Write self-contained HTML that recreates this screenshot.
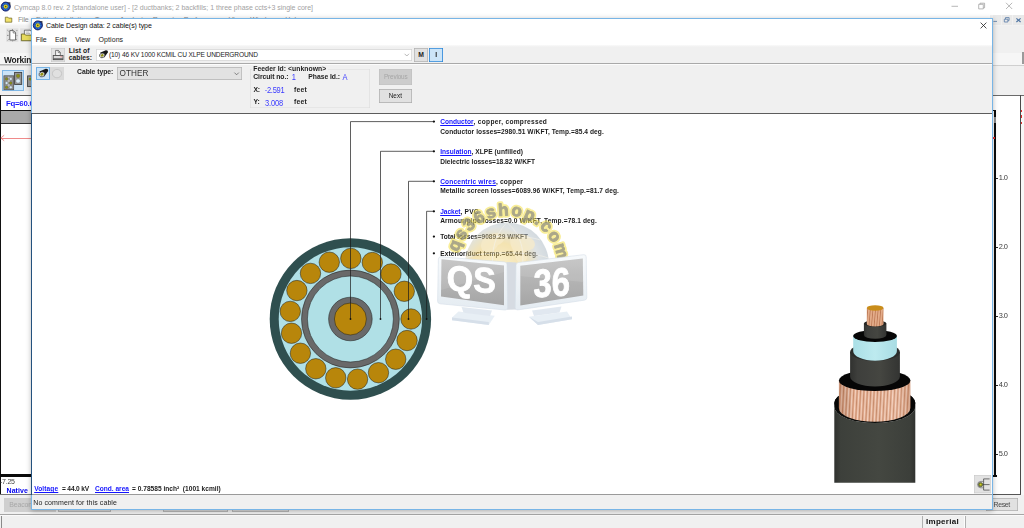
<!DOCTYPE html>
<html>
<head>
<meta charset="utf-8">
<title>Cymcap - Cable Design data</title>
<style>
html,body{margin:0;padding:0;}
body{width:1024px;height:528px;overflow:hidden;position:relative;background:#f0f0f0;font-family:"Liberation Sans",sans-serif;}
.a{position:absolute;}
.t{position:absolute;white-space:pre;font-family:"Liberation Sans",sans-serif;}
#main{filter:blur(0.35px);position:absolute;left:0;top:0;width:1024px;height:528px;overflow:hidden;}
#dlg{position:absolute;left:31px;top:18px;width:962px;height:492px;background:#f0f0f0;box-sizing:border-box;box-shadow:0 1px 5px rgba(0,0,0,0.28);}
#dlgin{filter:blur(0.35px);position:absolute;left:-31px;top:-18px;width:1024px;height:528px;}
</style>
</head>
<body>
<!-- ================= MAIN WINDOW (behind) ================= -->
<div id="main">
<!-- title bar + menu bar -->
<div class="a" style="left:0;top:0;width:1024px;height:25px;background:#fff"></div>
<!-- toolbar area -->
<div class="a" style="left:0;top:23px;width:1024px;height:29px;background:linear-gradient(#fff,#f0f0f0 3px,#f0f0f0)"></div>
<!-- tab strip -->
<div class="a" style="left:0;top:53px;width:1024px;height:11.5px;background:#f6f6f6"></div>
<div class="a" style="left:0;top:64.4px;width:1024px;height:2px;background:linear-gradient(#a4a4a4,#dedede)"></div>
<!-- selected tool icon (left) -->
<div class="a" style="left:2px;top:70px;width:22px;height:21px;background:#cce4f7;box-shadow:inset 0 0 0 1px #7fb7e6"></div>
<!-- left drawing area -->
<div class="a" style="left:0;top:95px;width:40px;height:1px;background:#5a5a5a"></div>
<div class="a" style="left:0;top:96px;width:40px;height:399px;background:#fff"></div>
<div class="a" style="left:0;top:110px;width:40px;height:13px;background:#a9a9a9"></div>
<div class="a" style="left:0;top:110px;width:40px;height:1px;background:#111"></div>
<div class="a" style="left:0;top:123px;width:40px;height:1px;background:#333"></div>
<div class="a" style="left:0;top:95px;width:1px;height:400px;background:#111"></div>
<div class="a" style="left:1px;top:137.5px;width:34px;height:1px;background:#f08a8a"></div>
<div class="a" style="left:0;top:474px;width:40px;height:3px;background:#0a0a0a"></div>
<div class="a" style="left:0;top:494px;width:40px;height:1px;background:#777"></div>
<!-- bottom button row -->
<div class="a" style="left:4px;top:498px;width:52px;height:14px;background:#cfcfcf"></div>
<div class="a" style="left:58px;top:498px;width:53px;height:14px;background:#dcdcdc;box-shadow:inset 0 0 0 1px #b8b8b8"></div>
<div class="a" style="left:163px;top:498px;width:65px;height:14px;background:#dcdcdc;box-shadow:inset 0 0 0 1px #b8b8b8"></div>
<div class="a" style="left:232px;top:498px;width:57px;height:14px;background:#dcdcdc;box-shadow:inset 0 0 0 1px #b8b8b8"></div>
<div class="a" style="left:986px;top:498.3px;width:31.7px;height:13px;background:#e1e1e1;box-shadow:inset 0 0 0 0.7px #b0b0b0"></div>
<div class="a" style="left:0;top:514px;width:1024px;height:1px;background:#a6a6a6"></div>
<div class="a" style="left:0;top:515px;width:1024px;height:1px;background:#fafafa"></div>
<div class="a" style="left:1px;top:516px;width:1px;height:12px;background:#8a8a8a"></div>
<div class="a" style="left:921.5px;top:516px;width:1px;height:12px;background:#b0b0b0"></div><div class="a" style="left:963.5px;top:516px;width:1px;height:12px;background:#fdfdfd"></div>
<div class="a" style="left:965px;top:516px;width:1px;height:12px;background:#b0b0b0"></div>
<!-- right strip: MDI buttons, drawing area, ruler -->
<div class="a" style="left:990px;top:14.5px;width:34px;height:10.2px;background:#f1f1f1"></div><div class="a" style="left:993px;top:15px;width:8px;height:9.6px;background:#e9e9e9"></div><div class="a" style="left:1002.3px;top:15px;width:9.4px;height:9.6px;background:#e9e9e9"></div><div class="a" style="left:1013px;top:15px;width:11px;height:9.6px;background:#e9e9e9"></div>
<div class="a" style="left:993px;top:53px;width:31px;height:11.5px;background:#f6f6f6"></div>
<div class="a" style="left:1022px;top:52px;width:2px;height:12px;background:#9a9a9a"></div>
<div class="a" style="left:993px;top:95px;width:28px;height:400px;background:#fff"></div>
<div class="a" style="left:993px;top:95px;width:31px;height:1px;background:#6a6a6a"></div><div class="a" style="left:1021px;top:96px;width:3px;height:399px;background:#f7f7f7"></div>
<div class="a" style="left:1020px;top:95px;width:1px;height:400px;background:#4a4a4a"></div>
<div class="a" style="left:993px;top:494px;width:28px;height:1px;background:#555"></div>
<div class="a" style="left:994.3px;top:110px;width:2px;height:367px;background:#0a0a0a"></div><div class="a" style="left:993px;top:475px;width:4px;height:2px;background:#0a0a0a"></div><div class="a" style="left:994.3px;top:116.5px;width:2px;height:6.5px;background:#8a8a8a"></div>
<div class="a" style="left:990px;top:110px;width:6px;height:1px;background:#0a0a0a"></div>
<div class="a" style="left:996px;top:178px;width:2px;height:1px;background:#222"></div>
<div class="a" style="left:996px;top:247px;width:2px;height:1px;background:#222"></div>
<div class="a" style="left:996px;top:316px;width:2px;height:1px;background:#222"></div>
<div class="a" style="left:996px;top:385px;width:2px;height:1px;background:#222"></div>
<div class="a" style="left:996px;top:454px;width:2px;height:1px;background:#222"></div>
<div class="a" style="left:1021px;top:110px;width:1px;height:2.4px;background:#e03030"></div>
<div class="a" style="left:1021px;top:114.7px;width:1px;height:3.3px;background:#e03030"></div><div class="a" style="left:1021px;top:121.5px;width:1px;height:2.3px;background:#e03030"></div>
<div class="a" style="left:993px;top:137px;width:2px;height:2px;background:#e03030"></div>
<svg class="a" style="left:0;top:0" width="1024" height="528" viewBox="0 0 1024 528">
  <!-- app icon -->
  <g transform="translate(5.7,6.6)">
  <path d="M0.5 -4.4L4.6 -4.4L4.8 0.6L2 3z" fill="#4a4a4a"/>
  <circle cx="0" cy="0" r="4.5" fill="#1f3fb4"/><circle cx="0" cy="0" r="4.5" fill="none" stroke="#0f1f66" stroke-width="0.9"/>
  <circle cx="0" cy="0" r="3" fill="none" stroke="#35c0d0" stroke-width="0.9" stroke-dasharray="0.9 0.9"/>
  <circle cx="0" cy="0" r="2.1" fill="#d8d020"/><circle cx="0" cy="0" r="0.8" fill="#5a5200"/>
  </g>
  <!-- window controls -->
  <g stroke="#9a9a9a" stroke-width="0.7" fill="none">
    <path d="M951.5 6.3H958"/>
    <path d="M978.7 4.3h4.6v4.6h-4.6z M980 4.3V3.2h4.6v4.6h-1.2"/>
    <path d="M1006 2.8l6.2 6.2M1012.2 2.8l-6.2 6.2"/>
  </g>
  <!-- MDI child controls -->
  <g stroke="#6585ad" stroke-width="0.9" fill="none">
    <path d="M993.4 21.4h3.6"/>
    <path d="M1004.3 19.2h3.6v2.8h-3.6z M1005.5 19.2v-1.6h3.6v2.8h-1.2"/>
    <path d="M1016.4 18.4l4.2 3.6M1020.6 18.4l-4.2 3.6" stroke="#4f75a3" stroke-width="1.2"/>
  </g>
  <!-- folder icon in menu bar -->
  <path d="M5.3 17.2h2.6l.7.9h3.2v4.1H5.3z" fill="#f2e36a" stroke="#6a6224" stroke-width="0.7"/>
  <!-- toolbar: new -->
  <rect x="6.2" y="28.4" width="12.2" height="13.4" fill="#e0e0e0"/>
  <path d="M9.8 30.6h3.6l2.2 2.2v7.2h-5.8z" fill="#fff" stroke="#4a4a4a" stroke-width="0.8"/>
  <path d="M13.2 30.8v2.2h2.2" fill="none" stroke="#4a4a4a" stroke-width="0.6"/>
  <g stroke="#6a6a6a" stroke-width="0.7"><path d="M7.4 30.2l1.2 1.1M17.2 30.2l-1 1M7 35.4h1.6M7.6 40.4l1.1-1M12.4 29v1.2M17.4 35.6h-.8M17 40l-.8-.7M12.6 41.4v-.8"/></g>
  <!-- toolbar: open -->
  <rect x="20.2" y="28.4" width="12.2" height="13.4" fill="#e0e0e0"/>
  <path d="M24.4 30.2h5.6l1.6 1.4v4.6h-7.2z" fill="#fff" stroke="#4a4a4a" stroke-width="0.7"/>
  <path d="M25.6 32h3.2M25.6 33.4h4.4" stroke="#777" stroke-width="0.5"/>
  <path d="M21.4 34h3.2l.9 1.1h6v5.6h-10.1z" fill="#e6da5e" stroke="#5e5a20" stroke-width="0.8"/>
  <!-- left tool icon art -->
  <rect x="3.9" y="75.8" width="9.8" height="13.9" fill="#8e8e8e" stroke="#4e4e4e" stroke-width="0.7"/>
  <g fill="#b9b9b9"><path d="M8.7 79.3l1.5 1.6-1.5 1.6-1.5-1.6zM8.7 83.5l1.5 1.6-1.5 1.6-1.5-1.6zM8.7 76.4l1.2 1.2-1.2 1.2-1.2-1.2z"/></g>
  <g stroke="#5a5a5a" stroke-width="0.3">
    <circle cx="6.6" cy="78.9" r="1.4" fill="#8b8f14"/><circle cx="10.75" cy="78.9" r="1.4" fill="#d5e9f7"/>
    <circle cx="6.6" cy="83.1" r="1.4" fill="#d5e9f7"/><circle cx="10.75" cy="83.1" r="1.4" fill="#8b8f14"/>
    <circle cx="6.6" cy="87.3" r="1.4" fill="#8b8f14"/><circle cx="10.75" cy="87.3" r="1.4" fill="#d5e9f7"/>
  </g>
  <rect x="14.6" y="72.4" width="7.1" height="12" fill="#9a9a9a" stroke="#3e3e3e" stroke-width="0.9"/>
  <circle cx="18.1" cy="75.8" r="1.9" fill="#8b8f14" stroke="#555" stroke-width="0.3"/>
  <ellipse cx="18.1" cy="81" rx="2.3" ry="2.1" fill="#d9ecf9" stroke="#666" stroke-width="0.3"/>
  <rect x="25" y="70" width="7" height="21" fill="#e9e9e9"/>
  <rect x="27.6" y="75.9" width="6" height="10.7" fill="#9a9a9a" stroke="#3e3e3e" stroke-width="0.9"/>
  <circle cx="30.2" cy="79" r="1.5" fill="#8b8f14"/>
  <!-- red arrow head -->
  <path d="M4.2 135.2L0.8 138l3.4 2.8" fill="none" stroke="#ee7a7a" stroke-width="0.8"/>
</svg>

<span class="t" style="left:14.00px;top:3.60px;font-size:7px;line-height:8.40px;font-weight:400;color:#a2a2a2;letter-spacing:-0.003px;">Cymcap 8.0 rev. 2 [standalone user] - [2 ductbanks; 2 backfills; 1 three phase ccts+3 single core]</span>
<span class="t" style="left:18.00px;top:16.00px;font-size:7px;line-height:8.40px;font-weight:400;color:#8a8a8a;letter-spacing:-0.195px;">File</span>
<span class="t" style="left:36.00px;top:16.40px;font-size:7px;line-height:8.40px;font-weight:400;color:#8a8a8a;letter-spacing:0.087px;">Edit   Installation   Types   Analysis   Reports   Preferences   View   Windows   Help</span>
<span class="t" style="left:4.00px;top:54.56px;font-size:8.4px;line-height:10.08px;font-weight:700;color:#222;letter-spacing:-0.194px;">Working</span>
<span class="t" style="left:6.00px;top:99.12px;font-size:7.8px;line-height:9.36px;font-weight:700;color:#1a1aff;letter-spacing:-0.238px;">Fq=60.0</span>
<span class="t" style="left:0.00px;top:478.20px;font-size:7px;line-height:8.40px;font-weight:400;color:#444;letter-spacing:-0.254px;">-7.25</span>
<span class="t" style="left:6.50px;top:486.60px;font-size:7px;line-height:8.40px;font-weight:700;color:#0000ee;letter-spacing:0.081px;">Native</span>
<span class="t" style="left:9.20px;top:500.60px;font-size:7px;line-height:8.40px;font-weight:400;color:#a8a8a8;letter-spacing:-0.158px;">Beacon</span>
<span class="t" style="left:993.60px;top:501.10px;font-size:7px;line-height:8.40px;font-weight:400;color:#4a4a4a;letter-spacing:-0.419px;">Reset</span>
<span class="t" style="left:926.00px;top:517.40px;font-size:8px;line-height:9.60px;font-weight:700;color:#111;letter-spacing:0.289px;">Imperial</span>
<span class="t" style="left:998.70px;top:173.96px;font-size:7.4px;line-height:8.88px;font-weight:400;color:#3a3a3a;letter-spacing:-0.527px;">1.0</span>
<span class="t" style="left:998.70px;top:242.76px;font-size:7.4px;line-height:8.88px;font-weight:400;color:#3a3a3a;letter-spacing:-0.527px;">2.0</span>
<span class="t" style="left:998.70px;top:312.16px;font-size:7.4px;line-height:8.88px;font-weight:400;color:#3a3a3a;letter-spacing:-0.527px;">3.0</span>
<span class="t" style="left:998.70px;top:380.76px;font-size:7.4px;line-height:8.88px;font-weight:400;color:#3a3a3a;letter-spacing:-0.527px;">4.0</span>
<span class="t" style="left:998.70px;top:449.76px;font-size:7.4px;line-height:8.88px;font-weight:400;color:#3a3a3a;letter-spacing:-0.527px;">5.0</span>
</div>
<!-- ================= DIALOG ================= -->
<div id="dlg"><div id="dlgin">
<!-- title + menu (white) -->
<div class="a" style="left:31px;top:18px;width:962px;height:27px;background:#fff"></div>
<!-- toolbar row 1 -->
<div class="a" style="left:31px;top:45px;width:962px;height:18px;background:#f0f0f0"></div>
<div class="a" style="left:31px;top:45px;width:962px;height:2px;background:linear-gradient(#fafafa,#f0f0f0)"></div>
<div class="a" style="left:31px;top:63px;width:962px;height:1px;background:#a9a9a9"></div>
<div class="a" style="left:31px;top:64px;width:962px;height:1px;background:#fcfcfc"></div>
<!-- print button -->
<div class="a" style="left:50.5px;top:48px;width:14px;height:13.5px;background:#e3e3e3;box-shadow:inset 0 0 0 0.6px #c6c6c6"></div>
<!-- combobox 1 -->
<div class="a" style="left:95.5px;top:48.6px;width:316.5px;height:12.6px;background:#fff;box-shadow:inset 0 0 0 0.7px #d2d2d2"></div>
<!-- M / I buttons -->
<div class="a" style="left:414.2px;top:48.4px;width:13.4px;height:13.2px;background:#e1e1e1;box-shadow:inset 0 0 0 0.7px #b2b2b2"></div>
<div class="a" style="left:429.4px;top:48.4px;width:13.6px;height:13.2px;background:#cce4f7;box-shadow:inset 0 0 0 0.8px #2b86d9"></div>
<!-- toggle buttons -->
<div class="a" style="left:35.7px;top:66.7px;width:13.9px;height:13.8px;border-radius:1px;background:#cce4f7;box-shadow:inset 0 0 0 0.8px #5aa2e0"></div>
<div class="a" style="left:49.8px;top:66.8px;width:14px;height:13.4px;background:#dadada"></div>
<!-- combobox 2 -->
<div class="a" style="left:117px;top:66.5px;width:124.7px;height:13.8px;background:#e2e2e2;box-shadow:inset 0 0 0 0.7px #b4b4b4"></div>
<!-- group box -->
<div class="a" style="left:249.6px;top:69px;width:120.2px;height:39.2px;box-shadow:inset 0 0 0 0.6px #dcdcdc;background:#f0f0f0"></div>
<div class="a" style="left:252px;top:66px;width:76px;height:6px;background:#f0f0f0"></div>
<!-- Previous / Next -->
<div class="a" style="left:379px;top:69.2px;width:32.8px;height:15.8px;background:#cccccc;box-shadow:inset 0 0 0 0.6px #bfbfbf"></div>
<div class="a" style="left:379px;top:88.8px;width:32.8px;height:13.8px;background:#e1e1e1;box-shadow:inset 0 0 0 0.7px #adadad"></div>
<!-- status bar -->
<div class="a" style="left:31px;top:495px;width:962px;height:15px;background:#f0f0f0"></div>
<svg class="a" style="left:0;top:0" width="1024" height="528" viewBox="0 0 1024 528">
  <!-- dialog icon -->
  <g transform="translate(37.8,25.4)">
  <path d="M0.5 -4.4L4.6 -4.4L4.8 0.6L2 3z" fill="#4a4a4a"/>
  <circle cx="0" cy="0" r="4.5" fill="#1f3fb4"/><circle cx="0" cy="0" r="4.5" fill="none" stroke="#0f1f66" stroke-width="0.9"/>
  <circle cx="0" cy="0" r="3" fill="none" stroke="#35c0d0" stroke-width="0.9" stroke-dasharray="0.9 0.9"/>
  <circle cx="0" cy="0" r="2.1" fill="#d8d020"/><circle cx="0" cy="0" r="0.8" fill="#5a5200"/>
  </g>
  <!-- close X -->
  <path d="M980.6 22.6l5.8 5.8M986.4 22.6l-5.8 5.8" stroke="#222" stroke-width="0.8" fill="none"/>
  <!-- print icon -->
  <path d="M55.6 55.6v-5.2h2.8l1.9 1.9v3.3z" fill="#f6f6f6" stroke="#4a4a4a" stroke-width="0.7"/>
  <path d="M58.2 50.6v2h2" fill="none" stroke="#4a4a4a" stroke-width="0.6"/>
  <rect x="53.2" y="55.5" width="9.8" height="4.2" fill="#dcdcdc" stroke="#444" stroke-width="0.8"/>
  <path d="M53.4 58.9h9.4" stroke="#444" stroke-width="1"/>
  <path d="M60.4 56.8h1.8" stroke="#e06868" stroke-width="0.7"/>
  <!-- cable icon in combobox 1 -->
  <g transform="translate(103.6,54.4)">
    <path d="M-3.6 -1.6L2.2 -4.2Q4.6 -4.4 4.4 -2.2L0.6 3.2z" fill="#161616"/>
    <ellipse cx="-1.4" cy="1" rx="2.7" ry="2.3" transform="rotate(-20 -1.4 1)" fill="#ececec" stroke="#1c1c1c" stroke-width="0.6"/>
    <ellipse cx="-1.4" cy="1" rx="1.5" ry="1.2" transform="rotate(-20 -1.4 1)" fill="#8f8f12"/>
  </g>
  <!-- cable icon in toggle -->
  <g transform="translate(43.4,73.2)">
    <path d="M-4 -1.6L2.4 -4.4Q5 -4.6 4.8 -2.2L0.6 3.6z" fill="#161616"/>
    <ellipse cx="-1.5" cy="1.1" rx="2.9" ry="2.5" transform="rotate(-20 -1.5 1.1)" fill="#ececec" stroke="#1c1c1c" stroke-width="0.6"/>
    <ellipse cx="-1.5" cy="1.1" rx="1.7" ry="1.4" transform="rotate(-20 -1.5 1.1)" fill="#8f8f12"/>
  </g>
  <!-- disabled circle in toggle 2 -->
  <ellipse cx="57" cy="73.6" rx="4.6" ry="4.2" fill="#e0e0e0" stroke="#bdbdbd" stroke-width="0.7"/>
  <!-- chevrons -->
  <path d="M404.6 53.8l2.2 2.2 2.2-2.2" fill="none" stroke="#9a9a9a" stroke-width="0.7"/>
  <path d="M234.4 72.6l2.2 2.2 2.2-2.2" fill="none" stroke="#555" stroke-width="0.7"/>
</svg>

<span class="t" style="left:46.00px;top:21.90px;font-size:7px;line-height:8.40px;font-weight:400;color:#111;letter-spacing:-0.047px;">Cable Design data<b style="font-weight:400">:</b> 2 cable(s) type</span>
<span class="t" style="left:35.80px;top:35.60px;font-size:7px;line-height:8.40px;font-weight:400;color:#222;letter-spacing:-0.145px;">File</span>
<span class="t" style="left:55.00px;top:35.60px;font-size:7px;line-height:8.40px;font-weight:400;color:#222;letter-spacing:-0.141px;">Edit</span>
<span class="t" style="left:75.20px;top:35.60px;font-size:7px;line-height:8.40px;font-weight:400;color:#222;letter-spacing:-0.062px;">View</span>
<span class="t" style="left:98.50px;top:35.60px;font-size:7px;line-height:8.40px;font-weight:400;color:#222;letter-spacing:0.082px;">Options</span>
<span class="t" style="left:68.80px;top:46.92px;font-size:6.8px;line-height:8.16px;font-weight:700;color:#222;letter-spacing:0.044px;">List of</span>
<span class="t" style="left:68.80px;top:53.72px;font-size:6.8px;line-height:8.16px;font-weight:700;color:#222;letter-spacing:-0.034px;">cables:</span>
<span class="t" style="left:109.00px;top:50.54px;font-size:6.6px;line-height:7.92px;font-weight:400;color:#222;letter-spacing:-0.136px;transform:scaleY(1.15);transform-origin:0 50%;">(10) 46 KV 1000 KCMIL CU XLPE UNDERGROUND</span>
<span class="t" style="left:418.30px;top:51.42px;font-size:6.8px;line-height:8.16px;font-weight:700;color:#222;letter-spacing:-0.172px;">M</span>
<span class="t" style="left:435.30px;top:51.42px;font-size:6.8px;line-height:8.16px;font-weight:700;color:#222;letter-spacing:-0.191px;">I</span>
<span class="t" style="left:77.00px;top:67.52px;font-size:6.8px;line-height:8.16px;font-weight:700;color:#222;letter-spacing:-0.031px;">Cable type:</span>
<span class="t" style="left:119.60px;top:68.68px;font-size:8.2px;line-height:9.84px;font-weight:400;color:#333;letter-spacing:0.049px;">OTHER</span>
<span class="t" style="left:253.20px;top:64.52px;font-size:6.8px;line-height:8.16px;font-weight:700;color:#222;letter-spacing:0.043px;">Feeder Id: &lt;unknown&gt;</span>
<span class="t" style="left:253.20px;top:72.72px;font-size:6.8px;line-height:8.16px;font-weight:700;color:#222;letter-spacing:-0.048px;">Circuit no.:</span>
<span class="t" style="left:291.80px;top:72.10px;font-size:7.5px;line-height:9.00px;font-weight:400;color:#3a3aff;letter-spacing:-1.372px;transform:scaleY(1.22);transform-origin:0 50%;">1</span>
<span class="t" style="left:308.30px;top:72.72px;font-size:6.8px;line-height:8.16px;font-weight:700;color:#222;letter-spacing:-0.041px;">Phase Id.:</span>
<span class="t" style="left:342.50px;top:72.10px;font-size:7.5px;line-height:9.00px;font-weight:400;color:#3a3aff;letter-spacing:0.484px;transform:scaleY(1.22);transform-origin:0 50%;">A</span>
<span class="t" style="left:253.50px;top:86.02px;font-size:6.8px;line-height:8.16px;font-weight:700;color:#222;letter-spacing:-0.398px;">X:</span>
<span class="t" style="left:264.70px;top:85.40px;font-size:7.5px;line-height:9.00px;font-weight:400;color:#3a3aff;letter-spacing:-0.264px;transform:scaleY(1.22);transform-origin:0 50%;">-2.591</span>
<span class="t" style="left:294.00px;top:86.02px;font-size:6.8px;line-height:8.16px;font-weight:700;color:#222;letter-spacing:0.227px;">feet</span>
<span class="t" style="left:253.50px;top:98.32px;font-size:6.8px;line-height:8.16px;font-weight:700;color:#222;letter-spacing:-0.148px;">Y:</span>
<span class="t" style="left:265.00px;top:97.70px;font-size:7.5px;line-height:9.00px;font-weight:400;color:#3a3aff;letter-spacing:-0.156px;transform:scaleY(1.22);transform-origin:0 50%;">3.008</span>
<span class="t" style="left:294.00px;top:98.32px;font-size:6.8px;line-height:8.16px;font-weight:700;color:#222;letter-spacing:0.227px;">feet</span>
<span class="t" style="left:384.00px;top:73.46px;font-size:6.4px;line-height:7.68px;font-weight:400;color:#a6a6a6;letter-spacing:-0.172px;transform:scaleY(1.12);transform-origin:0 50%;">Previous</span>
<span class="t" style="left:388.70px;top:91.96px;font-size:6.4px;line-height:7.68px;font-weight:400;color:#222;letter-spacing:0.040px;transform:scaleY(1.12);transform-origin:0 50%;">Next</span>
<span class="t" style="left:33.30px;top:498.60px;font-size:7px;line-height:8.40px;font-weight:400;color:#222;letter-spacing:0.096px;">No comment for this cable</span>
<div class="a" style="left:32px;top:113px;width:960px;height:382px;background:#fff"></div>
<div class="a" style="left:32px;top:113px;width:960px;height:1px;background:#5c5c5c"></div>
<div class="a" style="left:32px;top:494px;width:960px;height:1px;background:#9a9a9a"></div>

<svg class="a" style="left:0;top:0" width="1024" height="528" viewBox="0 0 1024 528">
<g stroke="#1a1a1a" stroke-width="0.5">
<circle cx="350.4" cy="319" r="80.7" fill="#2f4f4f" stroke="none"/>
<circle cx="350.4" cy="319" r="71.7" fill="#b0e0e6" stroke="none"/>
<circle cx="411.00" cy="319.00" r="10.2" fill="#b8860b"/>
<circle cx="407.05" cy="340.52" r="10.2" fill="#b8860b"/>
<circle cx="395.72" cy="359.23" r="10.2" fill="#b8860b"/>
<circle cx="378.48" cy="372.70" r="10.2" fill="#b8860b"/>
<circle cx="357.58" cy="379.17" r="10.2" fill="#b8860b"/>
<circle cx="335.74" cy="377.80" r="10.2" fill="#b8860b"/>
<circle cx="315.81" cy="368.76" r="10.2" fill="#b8860b"/>
<circle cx="300.40" cy="353.24" r="10.2" fill="#b8860b"/>
<circle cx="291.50" cy="333.25" r="10.2" fill="#b8860b"/>
<circle cx="290.28" cy="311.40" r="10.2" fill="#b8860b"/>
<circle cx="296.89" cy="290.55" r="10.2" fill="#b8860b"/>
<circle cx="310.48" cy="273.40" r="10.2" fill="#b8860b"/>
<circle cx="329.28" cy="262.20" r="10.2" fill="#b8860b"/>
<circle cx="350.82" cy="258.40" r="10.2" fill="#b8860b"/>
<circle cx="372.31" cy="262.50" r="10.2" fill="#b8860b"/>
<circle cx="390.95" cy="273.97" r="10.2" fill="#b8860b"/>
<circle cx="404.30" cy="291.30" r="10.2" fill="#b8860b"/>
<circle cx="350.4" cy="319" r="48.9" fill="#696969"/>
<circle cx="350.4" cy="319" r="43" fill="#b0e0e6"/>
<circle cx="350.4" cy="319" r="21.8" fill="#696969"/>
<circle cx="350.4" cy="319" r="16" fill="#b8860b"/>
</g>
<g fill="none" stroke="#1a1a1a" stroke-width="0.7">
<path d="M350.5 319V121.6H433.6"/>
<path d="M380.5 319V151.3H433.6"/>
<path d="M408.5 319V181.3H433.6"/>
<path d="M426.6 319V211.3H433.6"/>
</g>
<g fill="#111">
<circle cx="350.5" cy="319" r="0.9"/>
<circle cx="380.5" cy="319" r="0.9"/>
<circle cx="408.5" cy="319" r="0.9"/>
<circle cx="426.6" cy="319" r="0.9"/>
<circle cx="433.9" cy="121.6" r="1.15"/>
<circle cx="433.9" cy="151.3" r="1.15"/>
<circle cx="433.9" cy="181.3" r="1.15"/>
<circle cx="433.9" cy="211.3" r="1.15"/>
<circle cx="433.9" cy="236.6" r="1.15"/>
<circle cx="433.9" cy="253.3" r="1.15"/>
</g>

<defs>
  <pattern id="cu" width="3.4" height="10" patternUnits="userSpaceOnUse" patternTransform="skewX(-3)">
    <rect width="3.4" height="10" fill="#e5ae92"/>
    <rect x="0" width="0.9" height="10" fill="#c88c6a"/>
    <rect x="1.8" width="0.9" height="10" fill="#f6d8c6"/>
  </pattern>
  <pattern id="cu2" width="2.6" height="10" patternUnits="userSpaceOnUse" patternTransform="skewX(-5)">
    <rect width="2.6" height="10" fill="#dc9e78"/>
    <rect x="0" width="0.7" height="10" fill="#b87450"/>
    <rect x="1.4" width="0.6" height="10" fill="#f0c6aa"/>
  </pattern>
  <linearGradient id="jk" x1="0" y1="0" x2="1" y2="0">
    <stop offset="0" stop-color="#30322f"/><stop offset="0.08" stop-color="#3d403b"/><stop offset="0.55" stop-color="#444741"/><stop offset="0.93" stop-color="#3c3f3a"/><stop offset="1" stop-color="#30322f"/>
  </linearGradient>
  <linearGradient id="sc" x1="0" y1="0" x2="1" y2="0">
    <stop offset="0" stop-color="#30312f"/><stop offset="0.15" stop-color="#3e3f3c"/><stop offset="0.6" stop-color="#454641"/><stop offset="1" stop-color="#333432"/>
  </linearGradient>
  <linearGradient id="ins" x1="0" y1="0" x2="1" y2="0">
    <stop offset="0" stop-color="#aadfe6"/><stop offset="0.5" stop-color="#bdeaef"/><stop offset="1" stop-color="#a8dce3"/>
  </linearGradient>
  <linearGradient id="cush" x1="0" y1="0" x2="1" y2="0">
    <stop offset="0" stop-color="#7a3a1a" stop-opacity="0.25"/><stop offset="0.2" stop-color="#000" stop-opacity="0"/><stop offset="0.75" stop-color="#fff" stop-opacity="0.06"/><stop offset="1" stop-color="#7a3a1a" stop-opacity="0.22"/>
  </linearGradient>
</defs>
<!-- jacket -->
<path d="M834.3 407V482.7H915.3V407A40.5 16 0 0 1 834.3 407z" fill="url(#jk)"/>
<path d="M834.3 407A40.5 16 0 0 0 915.3 407L915.3 403A40.5 16 0 0 0 834.3 403z" fill="#0b0c0b"/>
<ellipse cx="874.8" cy="403" rx="40.5" ry="16" fill="#050505"/>
<!-- concentric copper wires -->
<path d="M838.9 380.5V408A35.75 13.8 0 0 0 910.4 408V380.5z" fill="url(#cu)"/>
<path d="M838.9 380.5V408A35.75 13.8 0 0 0 910.4 408V380.5z" fill="url(#cush)"/>
<ellipse cx="874.65" cy="380.5" rx="35.75" ry="10.5" fill="#060606"/>
<!-- insulation screen -->
<path d="M850.1 352V376.6A24.9 9.8 0 0 0 899.9 376.6V352z" fill="url(#sc)"/>
<ellipse cx="875" cy="352" rx="24.9" ry="9" fill="#2b2c2a"/>
<!-- insulation -->
<path d="M853.2 335.6V351A21.85 9.7 0 0 0 896.9 351V335.6z" fill="url(#ins)"/>
<ellipse cx="875.05" cy="335.9" rx="21.85" ry="6" fill="#060606"/>
<!-- conductor screen -->
<path d="M863.9 323.6V335.1A11.25 3.6 0 0 0 886.4 335.1V323.6z" fill="url(#sc)"/>
<ellipse cx="875.15" cy="323.6" rx="11.25" ry="3.2" fill="#242523"/>
<!-- conductor -->
<path d="M866.8 308V324A8.35 2.6 0 0 0 883.5 324V308z" fill="url(#cu2)"/>
<ellipse cx="875.15" cy="308" rx="8.35" ry="2.7" fill="#c98d1a"/>

<rect x="974.4" y="475.4" width="16.4" height="17.6" fill="#e2e2e2" stroke="#c4c4c4" stroke-width="0.6"/>
<g fill="none" stroke="#3a3a3a" stroke-width="0.7">
  <path d="M983.6 478.9v11.2M983.6 478.9h6M983.6 490.1h6M982.6 484.6h7"/>
  <path d="M983.4 481.4h-2.6a3.2 3.2 0 0 0 0 6.4h2.6" stroke-width="0.5"/>
</g>
<circle cx="980.6" cy="484.6" r="2.2" fill="#7d8a1e" stroke="#333" stroke-width="0.5"/>
<rect x="979.8" y="483.8" width="1.6" height="1.6" fill="#d4c928"/>

</svg>
<span class="t" style="left:440.20px;top:118.14px;font-size:6.6px;line-height:7.92px;font-weight:700;color:#1414ff;letter-spacing:0.006px;text-decoration:underline;text-decoration-thickness:0.6px;text-underline-offset:0.6px;">Conductor</span>
<span class="t" style="left:473.60px;top:118.14px;font-size:6.6px;line-height:7.92px;font-weight:700;color:#1c1c1c;letter-spacing:0.290px;">, copper, compressed</span>
<span class="t" style="left:440.20px;top:127.94px;font-size:6.6px;line-height:7.92px;font-weight:700;color:#1c1c1c;letter-spacing:0.078px;">Conductor losses=2980.51 W/KFT, Temp.=85.4 deg.</span>
<span class="t" style="left:440.20px;top:147.84px;font-size:6.6px;line-height:7.92px;font-weight:700;color:#1414ff;letter-spacing:0.016px;text-decoration:underline;text-decoration-thickness:0.6px;text-underline-offset:0.6px;">Insulation</span>
<span class="t" style="left:471.50px;top:147.84px;font-size:6.6px;line-height:7.92px;font-weight:700;color:#1c1c1c;letter-spacing:0.055px;">, XLPE (unfilled)</span>
<span class="t" style="left:440.20px;top:157.54px;font-size:6.6px;line-height:7.92px;font-weight:700;color:#1c1c1c;letter-spacing:-0.011px;">Dielectric losses=18.82 W/KFT</span>
<span class="t" style="left:440.20px;top:177.84px;font-size:6.6px;line-height:7.92px;font-weight:700;color:#1414ff;letter-spacing:0.166px;text-decoration:underline;text-decoration-thickness:0.6px;text-underline-offset:0.6px;">Concentric wires</span>
<span class="t" style="left:496.00px;top:177.84px;font-size:6.6px;line-height:7.92px;font-weight:700;color:#1c1c1c;letter-spacing:0.168px;">, copper</span>
<span class="t" style="left:440.20px;top:187.44px;font-size:6.6px;line-height:7.92px;font-weight:700;color:#1c1c1c;letter-spacing:0.091px;">Metallic screen losses=6089.96 W/KFT, Temp.=81.7 deg.</span>
<span class="t" style="left:440.20px;top:207.84px;font-size:6.6px;line-height:7.92px;font-weight:700;color:#1414ff;letter-spacing:-0.041px;text-decoration:underline;text-decoration-thickness:0.6px;text-underline-offset:0.6px;">Jacket</span>
<span class="t" style="left:460.50px;top:207.84px;font-size:6.6px;line-height:7.92px;font-weight:700;color:#1c1c1c;letter-spacing:0.193px;">, PVC</span>
<span class="t" style="left:440.20px;top:217.44px;font-size:6.6px;line-height:7.92px;font-weight:700;color:#1c1c1c;letter-spacing:0.124px;">Armour/pipe losses=0.0 W/KFT, Temp.=78.1 deg.</span>
<span class="t" style="left:440.20px;top:233.14px;font-size:6.6px;line-height:7.92px;font-weight:700;color:#1c1c1c;letter-spacing:-0.008px;">Total losses=9089.29 W/KFT</span>
<span class="t" style="left:440.20px;top:249.84px;font-size:6.6px;line-height:7.92px;font-weight:700;color:#1c1c1c;letter-spacing:0.066px;">Exterior/duct temp.=65.44 deg.</span>
<span class="t" style="left:34.20px;top:485.24px;font-size:6.6px;line-height:7.92px;font-weight:700;color:#1414ff;letter-spacing:0.110px;text-decoration:underline;text-decoration-thickness:0.6px;text-underline-offset:0.6px;">Voltage</span>
<span class="t" style="left:62.00px;top:485.24px;font-size:6.6px;line-height:7.92px;font-weight:700;color:#1c1c1c;letter-spacing:-0.158px;">= 44.0 kV</span>
<span class="t" style="left:95.00px;top:485.24px;font-size:6.6px;line-height:7.92px;font-weight:700;color:#1414ff;letter-spacing:-0.008px;text-decoration:underline;text-decoration-thickness:0.6px;text-underline-offset:0.6px;">Cond. area</span>
<span class="t" style="left:132.00px;top:485.24px;font-size:6.6px;line-height:7.92px;font-weight:700;color:#1c1c1c;letter-spacing:0.006px;">= 0.78585 inch²  (1001 kcmil)</span>
<svg class="a" style="left:0;top:0" width="1024" height="528" viewBox="0 0 1024 528">
<defs>
  <radialGradient id="gl" cx="0.40" cy="0.55" r="0.62">
    <stop offset="0" stop-color="#f6e39a"/><stop offset="0.5" stop-color="#e9c45a"/><stop offset="0.8" stop-color="#b9c2c6"/><stop offset="1" stop-color="#9fb0bb"/>
  </radialGradient>
  <linearGradient id="scr" x1="0" y1="0" x2="0" y2="1">
    <stop offset="0" stop-color="#bcbcbc"/><stop offset="1" stop-color="#9f9f9f"/>
  </linearGradient>
  <linearGradient id="bez" x1="0" y1="0" x2="0" y2="1">
    <stop offset="0" stop-color="#f7fafc"/><stop offset="1" stop-color="#e3eaf1"/>
  </linearGradient>
  <clipPath id="glclip"><rect x="440" y="200" width="140" height="70"/></clipPath>
  <path id="wmarc" d="M 456 266.5 A 51 51 0 0 1 558 266.5"/>
</defs>
<g opacity="0.93">
  <!-- globe -->
  <g clip-path="url(#glclip)" opacity="0.5">
    <circle cx="507" cy="264.5" r="42" fill="url(#gl)"/>
    <path d="M484 238c6-5 14-6 19-3 4 3 0 8-5 10-3 6-9 9-14 7-4-3-4-9 0-14z M512 236c8-4 17-1 22 5 3 6-2 10-8 9 3 6 1 12-5 14-5-2-6-9-8-14-3-5-4-10-1-14z" fill="#efd58e" opacity="0.75"/>
    <path d="M507 222.5c-12 12-16 28-14 46M507 222.5c14 12 18 28 15 46M466 258c14-7 66-7 82 0M474 240c12-5 54-5 66 0" fill="none" stroke="#e8e4d4" stroke-width="0.8" opacity="0.8"/>
  </g>
  <!-- curved text -->
  <g font-family="'Liberation Sans',sans-serif" font-weight="700" font-size="17">
    <text opacity="0.62" fill="#f4e04c" stroke="#f4e04c" stroke-width="4.4" stroke-linejoin="round"><textPath href="#wmarc" startOffset="14.2" textLength="139" lengthAdjust="spacing">qs36shop.com</textPath></text>
    <text opacity="0.72" fill="#84847a" stroke="#84847a" stroke-width="0.9" stroke-linejoin="round"><textPath href="#wmarc" startOffset="14.2" textLength="139" lengthAdjust="spacing">qs36shop.com</textPath></text>
  </g>
  <path d="M506.5 262L516.5 262.6L516 309.5L507 309.8z" fill="#d3d9e0"/>
  <!-- left monitor -->
  <path d="M452 317.5L458.5 311.6L494.8 315.8L488.8 325L452 320.2z" fill="#e7eef5"/>
  <path d="M452 317.5L488.8 322L488.8 325L452 320.2z" fill="#d3dde8"/>
  <path d="M461.5 307L492 310.5L490 316L463.5 312.8z" fill="#dfe7ef"/>
  <path d="M440.5 256.8Q438.4 257 438.4 259.4L437.6 301.2Q437.6 303.4 440 303.8L505 310Q507.6 310.2 507.6 307.6L507 264.5Q507 262.2 504.6 261.9z" fill="url(#bez)" stroke="#d2dbe5" stroke-width="0.6"/>
  <path d="M441.5 259.2L504 265.6L504 305.2L441 296.4z" fill="url(#scr)"/>
  <path d="M441.5 259.2L504 265.6L504 272L441.3 290z" fill="#ffffff" opacity="0.10"/>
  <!-- right monitor -->
  <path d="M528.8 316.7L538 325L572 319.2L567 311.5z" fill="#e7eef5"/>
  <path d="M528.8 316.7L538 322L572 316.6L572 319.2L538 325z" fill="#d3dde8"/>
  <path d="M532 310.5L561.5 306.5L559.5 312.5L534 316z" fill="#dfe7ef"/>
  <path d="M518.6 262.5Q516 262.8 516 265.4L515.2 307.6Q515.2 310.2 517.8 309.9L584.4 300.2Q586.8 299.8 586.8 297.4L586.2 257Q586.2 254.4 583.6 254.7z" fill="url(#bez)" stroke="#d2dbe5" stroke-width="0.6"/>
  <path d="M520.3 265.8L582.8 258.6L583.3 295.4L520.3 305.6z" fill="url(#scr)"/>
  <path d="M520.3 265.8L582.8 258.6L583 282L520.3 276z" fill="#ffffff" opacity="0.10"/>
  <!-- QS / 36 -->
  <g font-family="'Liberation Sans',sans-serif" font-weight="700" fill="#fff" stroke="#fff" stroke-width="0.9" stroke-linejoin="round">
    <text transform="translate(446.8,290.2) skewY(3.5) scale(0.955,1)" font-size="35.5">QS</text>
    <text transform="translate(533.4,297.6) skewY(-4) scale(0.83,1)" font-size="39.5">36</text>
  </g>
</g>

</svg>
<div class="a" style="left:31px;top:18px;width:962px;height:492px;box-sizing:border-box;border:1px solid #78b5e6;pointer-events:none"></div>
<div class="a" style="left:31px;top:113px;width:1px;height:382px;background:#24527e"></div>

</div></div>
</body>
</html>
